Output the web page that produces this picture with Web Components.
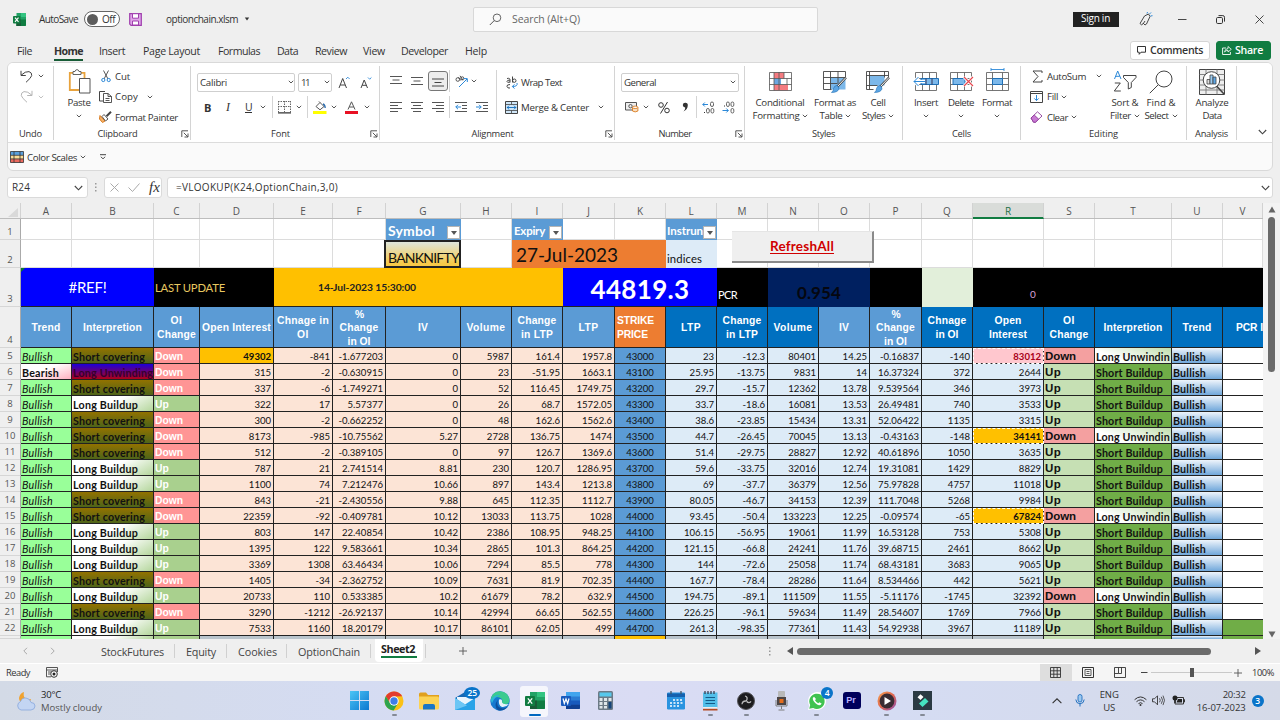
<!DOCTYPE html>
<html lang="en">
<head>
<meta charset="utf-8">
<title>optionchain.xlsm - Excel</title>
<style>
html,
body {
    margin: 0;
    height: 720px;
    overflow: hidden;
}
body {
    font-family: 'Open Sans', 'Noto Sans', sans-serif;
    background: #efefef;
}
</style>
</head>
<body>
<excel-desktop></excel-desktop>
<script>
(function() {
    // name: [width, height, svg content]
    const ICONS = {
        chev: [6, 4, '<path d="M.8.8 3 3 5.2.8" fill="none" stroke="#444" stroke-width=".9"/>'],
        chevlight: [6, 4, '<path d="M.8.8 3 3 5.2.8" fill="none" stroke="#bbb" stroke-width=".9"/>'],
        chevbig: [9, 6, '<path d="M.8 1 4.5 4.8 8.2 1" fill="none" stroke="#444" stroke-width="1.1"/>'],
        caret: [6, 4, '<path d="M.8.5h4.4L3 3.5z" fill="#333"/>'],
        excel: [13, 13, '<path d="M3.5 0H12q1 0 1 1v11q0 1-1 1H3.500z" fill="#21a366"/><path d="M8 0h4q1 0 1 1v3H8z" fill="#33c481"/><path d="M3.500 6.500H13V12q0 1-1 1H3.500z" fill="#107c41"/><path d="M3.500 6.500H8V13H3.500z" fill="#185c37"/><rect y="3" width="7.500" height="7.500" rx=".8" fill="#107c41"/><path d="m2 4.700 3.500 4.200m0-4.200L2 8.900" stroke="#fff" stroke-width="1.100"/>'],
        save: [13, 13, '<path d="M.7.700h11.600v11.600H2L.7 11z" fill="#dfa6e8" stroke="#a03fae" stroke-width="1.200"/><path d="M3.500.700h6v4.500h-6zM3.500 12V8h6v4z" fill="#fff" stroke="#a03fae"/>'],
        search: [13, 13, '<circle cx="8" cy="4.800" r="3.800" fill="none" stroke="#555" stroke-width=".9"/><path d="M5.200 7.600.8 12" stroke="#555"/>'],
        pen: [15, 14, '<path d="M3.500 12.800 2 11.500 6.500 4l4-2 1.500 2.500L8.500 12l-1.500 1-1.500-1.500zM5 12l2-3" fill="none" stroke="#333" stroke-width=".9"/><path d="M9 1.500 9.500 0m2 2L13 .5m-.5 3.500 2-.3" stroke="#2b88d8"/>'],
        min: [9, 9, '<path d="M0 4.500h8.500" stroke="#333" stroke-width=".9"/>'],
        restore: [9, 9, '<rect x=".5" y="2.500" width="6" height="6" rx="1.200" fill="none" stroke="#333"/><path d="M2.500.6h4.300q1.700 0 1.700 1.700v4.300" fill="none" stroke="#333"/>'],
        close: [9, 9, '<path d="m.5.500 8 8m0-8-8 8" stroke="#333" stroke-width=".9"/>'],
        comment: [9, 9, '<path d="M.5.500h8v5.700H4L2.200 8.300V6.200H.5z" fill="none" stroke="#333"/>'],
        share: [10, 10, '<path d="M4 3H.6v6.500h7.800V7" fill="none" stroke="#fff" stroke-width=".9"/><path d="M2.500 7Q3 3.800 6 3.500V1.500L9.300 4.300 6 7V5.300Q4 5.200 2.500 7z" fill="none" stroke="#fff" stroke-width=".8"/>'],
        undo: [13, 13, '<path d="M1 .8v4.700h4.800M1 5.300Q5.500 1 9 1.600q3.200 1 2.700 4Q11 8 6 12.300" fill="none" stroke="#444" stroke-width="1"/>'],
        redo: [13, 13, '<path d="M12 .8v4.700H7.200M12 5.300Q7.500 1 4 1.600.8 2.600 1.300 5.600 2 8 7 12.300" fill="none" stroke="#b5b5b5" stroke-width="1"/>'],
        paste: [23, 25, '<path d="M5 3.800H1.800V21h10M13 3.800h3.500V9" fill="none" stroke="#e8a33d" stroke-width="1.800"/><path d="M5 2.500h2Q7.500.6 9 .6t2 1.900h2v3H5z" fill="#fff" stroke="#555" stroke-width=".9"/><path d="M11.500 9.500H22V24H11.500z" fill="#fff" stroke="#555"/>'],
        cut: [10, 12, '<path d="M2.500.5 7 9M7.500.5 3 9" stroke="#444" stroke-width=".9"/><circle cx="2.300" cy="10" r="1.600" fill="none" stroke="#2b88d8"/><circle cx="7.700" cy="10" r="1.600" fill="none" stroke="#2b88d8"/>'],
        copy: [13, 12, '<path d="M4 10H.5V.5H6" fill="none" stroke="#444"/><path d="M4.500 2.500H9l3.500 3v6h-8zM9 2.500v3h3.500M6.500 7.500h4m-4 2h4" fill="none" stroke="#444" stroke-width=".9"/>'],
        painter: [13, 12, '<path d="m1 4.500 5 5.500-2.500 1.500L.5 8z" fill="#f6b26b" stroke="#d97b1e"/><path d="M5 3.500 9 8 6.500 10 3 5.500z" fill="#fff" stroke="#444" stroke-width=".9"/><path d="M7.500 5.300 12 .8" stroke="#444" stroke-width="2"/>'],
        launcher: [8, 8, '<path d="M.8 7V.8H7M2.800 2.800l4 4M7 3.500V7H3.500" fill="none" stroke="#444" stroke-width=".9"/>'],
        up: [12, 13, '<path d="m1 12 3.700-9.500L8.500 12M2.200 9H7" fill="none" stroke="#444"/><path d="m8 3 1.800-1.800L11.600 3" fill="none" stroke="#2b88d8" stroke-width=".9"/>'],
        down: [12, 13, '<path d="m1 12 3.200-8L7.500 12M2.200 9.300H6.300" fill="none" stroke="#444"/><path d="m8 1.500 1.700 1.700 1.700-1.700" fill="none" stroke="#2b88d8" stroke-width=".9"/>'],
        borders: [13, 13, '<path d="M.5 0v11M6.500 0v11M12.500 0v11M0 .5h13M0 5.500h13" stroke="#666" stroke-dasharray="1.500 1"/><path d="M0 11.800h13" stroke="#333" stroke-width="1.200"/>'],
        fill: [14, 13, '<path d="m3 5.500 4-4 4 4-4 3.300z" fill="#fff" stroke="#444" stroke-width=".9"/><path d="m7 1.500-1-1" stroke="#444"/><path d="M10 3q2 .5 2.200 4" fill="none" stroke="#2b6cb0" stroke-width="1.300"/><path d="M0 10h13.500v3H0z" fill="#ff0"/>'],
        color: [13, 13, '<path d="M3 8.500 6.500.8 10 8.500M4.300 6h4.500" fill="none" stroke="#555"/><path d="M0 10h13v3H0z" fill="#e81123"/>'],
        top: [12, 12, '<path d="M0 1.500h12M2.500 5h7M0 8.500h12" stroke="#555"/>'],
        middle: [12, 12, '<path d="M0 2.500h12M2.500 6h7M0 9.500h12" stroke="#555"/>'],
        bottom: [12, 12, '<path d="M0 4h12M2.500 7.500h7M0 11h12" stroke="#444"/>'],
        left: [12, 12, '<path d="M0 1.500h12M0 4.500h8M0 7.500h12M0 10.500h8" stroke="#555"/>'],
        center: [12, 12, '<path d="M0 1.500h12M2 4.500h8M0 7.500h12M2 10.500h8" stroke="#555"/>'],
        right: [12, 12, '<path d="M0 1.500h12M4 4.500h8M0 7.500h12M4 10.500h8" stroke="#555"/>'],
        outdent: [12, 12, '<path d="M0 1.500h12M7 4.500h5M7 7.500h5M0 10.500h12" stroke="#555"/><path d="M6 6H.8M3 3.800.8 6 3 8.200" fill="none" stroke="#2b88d8"/>'],
        indent: [12, 12, '<path d="M0 1.500h12M7 4.500h5M7 7.500h5M0 10.500h12" stroke="#555"/><path d="M0 6h5.200M3 3.800 5.200 6 3 8.200" fill="none" stroke="#2b88d8"/>'],
        orient: [13, 13, '<circle cx="2.800" cy="4.500" r="1.800" fill="none" stroke="#444" stroke-width=".9"/><path d="m3.500 2.200 2.300 3.300M5 .8l3 4.400" stroke="#444" stroke-width=".9"/><circle cx="7.300" cy="3.300" r="1.500" fill="none" stroke="#444" stroke-width=".9"/><path d="m4 12 8-8M8.800 3.600h3.500V7" fill="none" stroke="#2b88d8"/>'],
        wrap: [12, 13, '<path d="M1 2.500q3.500-1 3 2.500v1.500M4 4Q1 4 1 5.500T4 6M6.500.5v6" fill="none" stroke="#444"/><circle cx="8.300" cy="4.700" r="1.700" fill="none" stroke="#444"/><path d="M4 8.500q-3.500 0-3 2t3 1.500" fill="none" stroke="#444"/><path d="M11 7q1 3.500-4.500 3.500M8.500 8.300l-2.200 2.200 2.200 2" fill="none" stroke="#2b88d8"/>'],
        merge: [13, 13, '<path d="M.5.500h12v12H.5z" fill="#cfe6f8" stroke="#444"/><path d="M.5 3.500h12m-12 6h12M6.500.500v3m0 6v3" stroke="#444" stroke-width=".8"/><path d="M2 6.500h9M4 4.700 2.200 6.500 4 8.300m5-3.600 1.800 1.800L9 8.300" fill="none" stroke="#0f6cbd" stroke-width=".9"/>'],
        money: [14, 12, '<path d="M.5 1.500h11V9H.5z" fill="#eee" stroke="#555"/><circle cx="5.500" cy="5.200" r="1.700" fill="none" stroke="#555"/><path d="M7.500 6.500V10q2.700 1.800 5.400 0V6.500z" fill="#fbe1c3" stroke="#d97b1e" stroke-width=".9"/><ellipse cx="10.200" cy="6.300" rx="2.700" ry="1.200" fill="#fff" stroke="#d97b1e" stroke-width=".9"/>'],
        percent: [12, 13, '<circle cx="3" cy="4" r="2.300" fill="none" stroke="#333"/><circle cx="9" cy="9.500" r="2.300" fill="none" stroke="#333"/><path d="m9.500 1-7 11.500" stroke="#333"/>'],
        comma: [7, 13, '<path d="M.8 4a2.500 2.500 0 1 1 5 .3Q5.700 8.500 1.500 10.500 3.700 8 3.200 6.500.9 6.300.8 4z" fill="#333"/>'],
        incdec: [13, 13, '<path d="M6 3.500H.8M2.800 1.500l-2 2 2 2" fill="none" stroke="#2b88d8"/><rect x="8.500" y="1" width="3" height="4.500" rx="1.500" fill="none" stroke="#555" stroke-width=".9"/><rect x="4.500" y="7.500" width="2.800" height="4.500" rx="1.400" fill="none" stroke="#555" stroke-width=".9"/><rect x="9" y="7.500" width="2.800" height="4.500" rx="1.400" fill="none" stroke="#555" stroke-width=".9"/><path d="M2 11.500h1" stroke="#333"/>'],
        decdec: [13, 13, '<path d="M.5 9.500h5.800m-2-2 2 2-2 2" fill="none" stroke="#2b88d8"/><rect x="4.500" y="1" width="2.800" height="4.500" rx="1.400" fill="none" stroke="#555" stroke-width=".9"/><rect x="9" y="1" width="2.800" height="4.500" rx="1.400" fill="none" stroke="#555" stroke-width=".9"/><rect x="9" y="7.500" width="2.800" height="4.500" rx="1.400" fill="none" stroke="#555" stroke-width=".9"/><path d="M2 5h1" stroke="#333"/>'],
        cond: [23, 19, '<path d="M.5.500h22v18H.5z" fill="#fff"/><path d="M5 .5h10v6H5zM5 12.500h14v6H5z" fill="#f47b80"/><path d="M5 6.500h7v6H5z" fill="#6aa6e0"/><path d="M.5.500h22v18H.5zM.5 6.500h22m-22 6h22M5 .5v18M15 .5v6m3 0v6M10 0v18" fill="none" stroke="#555" stroke-width=".8"/>'],
        table: [24, 22, '<path d="M.5.500h22v18H.5z" fill="#fff"/><path d="M7.500 6.500h15v12h-15z" fill="#7cb8ea"/><path d="M22.500 8V.5H.5v18h8M.5 6.500h22m-22 6h14M7.500.5v18m7.500-18v12" fill="none" stroke="#444" stroke-width=".9"/><path d="M23 6.500 14 16" stroke="#444" stroke-width="2.400"/><path d="M23 6.500 14 16" stroke="#fff"/><path d="M13.500 14.500q2.500.500 2.500 3.500-1.500 3.500-7.500 3.500 2-1.500 2-4 1-3 3-3z" fill="#5ca5e3" stroke="#1f6fb5" stroke-width=".6"/>'],
        cellstyle: [24, 22, '<path d="M.5.500h22v18H.5z" fill="#fff"/><path d="M3.500 4.500h15v10h-15z" fill="#7cb8ea"/><path d="M22.500 7V.5H.5v18h7M.5 4.500h22M3.500.5v18M.5 14.500h11M18.500.5v6" fill="none" stroke="#444" stroke-width=".9"/><path d="M23 6.500 14 16" stroke="#444" stroke-width="2.400"/><path d="M23 6.500 14 16" stroke="#fff"/><path d="M13.500 14.500q2.500.500 2.500 3.500-1.500 3.500-7.500 3.500 2-1.500 2-4 1-3 3-3z" fill="#5ca5e3" stroke="#1f6fb5" stroke-width=".6"/>'],
        insert: [26, 19, '<path d="M2.500.500h21v18h-21zM2.500 6.500h21m-21 6h21M9.500.5v18m7-18v18" fill="#fff" stroke="#666" stroke-width=".9"/><path d="M8 6.500h17.500v6H8z" fill="#7cb8ea" stroke="#1f6fb5"/><path d="M13 6.500v6m6-6v6" stroke="#335"/><path d="M12 9.500H1m4.500-4.500L1 9.500 5.500 14" fill="none" stroke="#fff" stroke-width="3"/><path d="M12 9.500H1m4.500-4.500L1 9.500 5.500 14" fill="none" stroke="#2b88d8"/>'],
        delete: [25, 19, '<path d="M1.500.500h21v18h-21zM1.500 6.500h21m-21 6h21M8.500.5v18m7-18v18" fill="#fff" stroke="#666" stroke-width=".9"/><path d="M4 6.500h12v6H4z" fill="#7cb8ea" stroke="#1f6fb5"/><path d="m15 5 9 9m0-9-9 9" stroke="#fff" stroke-width="3"/><path d="m15 5 9 9m0-9-9 9" stroke="#e8474f" stroke-width="1.200"/>'],
        format: [23, 27, '<path d="M5 1.500h13M5 0v3m13-3v3" stroke="#2b88d8" stroke-width=".9"/><path d="M.5 4.500h22v18H.5zM.5 10.500h22m-22 6h22M6.500 4.500v18m10-18v18" fill="#fff" stroke="#666" stroke-width=".9"/><path d="M6.500 10.500h10v6h-10z" fill="#7cb8ea" stroke="#1f6fb5"/>'],
        sum: [11, 13, '<path d="M10 3V1H1l5 5.500L1 12h9v-2" fill="none" stroke="#444"/>'],
        fillcell: [13, 12, '<path d="M.5.500h12v11H.5z" fill="#fff" stroke="#444"/><path d="M.5 2.500h12" stroke="#444"/><path d="M6.500 4v5.500M4.300 7.400l2.200 2.200 2.200-2.200" fill="none" stroke="#2b88d8"/>'],
        eraser: [13, 12, '<path d="m1 7 6.500-6.200L12 5 5.500 11.200h-2z" fill="#fff" stroke="#8d3c98" stroke-width=".9"/><path d="m1 7 3.200-3 4.500 4.200-3.200 3h-2z" fill="#c879d3" stroke="#8d3c98" stroke-width=".9"/>'],
        sort: [24, 23, '<path d="m1.500 9 3.200-8L8 9M2.700 6.300h4" fill="none" stroke="#2b88d8"/><path d="M1.800 13h5.500l-6 8h6.500" fill="none" stroke="#444"/><path d="M10.500 5.500h12.500v2l-4.700 5v5l-3 1.500v-6.500l-4.800-5z" fill="#fff" stroke="#444"/>'],
        find: [24, 24, '<circle cx="15" cy="9" r="8" fill="none" stroke="#444"/><path d="M9.300 14.700.8 23.200" stroke="#444"/>'],
        analyze: [26, 26, '<path d="M.5.500h25v25H.5z" fill="#eee" stroke="#444"/><path d="M.5 5.500h25M.5 11h25M.5 16h25M.5 21h25M7 .5v25m11-25v25" stroke="#777" stroke-width=".9"/><path d="m17.500 17 7.500 8" stroke="#444" stroke-width="1.600"/><circle cx="12.500" cy="11" r="8.300" fill="#fff" stroke="#444"/><path d="M8 10.500h3V15H8z" fill="#ddd" stroke="#444" stroke-width=".8"/><path d="M11 6h3v9h-3z" fill="#9ccbf0" stroke="#444" stroke-width=".8"/><path d="M14 8h3v7h-3z" fill="#5ca5e3" stroke="#444" stroke-width=".8"/>'],
        scales: [14, 12, '<path d="M.5.500h13v3.800H.5z" fill="#5aa0dc"/><path d="M.5 4.300h13v3.600H.5z" fill="#fbdc95"/><path d="M.5 7.900h13v3.600H.5z" fill="#ec6a5e"/><path d="M.5.500h13v11H.5zM.5 4.300h13M.5 7.900h13M4 .5v11m6-11v11" fill="none" stroke="#333" stroke-width=".8"/>'],
        custom: [6, 6, '<path d="M0 .7h6" stroke="#444"/><path d="m.8 2.800 2.200 2 2.200-2" fill="none" stroke="#444" stroke-width=".9"/>'],
        dots: [2, 9, '<path d="M0 0h1.500v1.500H0zM0 3.500h1.500V5H0zM0 7h1.500v1.500H0z" fill="#999"/>'],
        cross: [9, 9, '<path d="m.5.500 8 8m0-8-8 8" stroke="#aaa"/>'],
        check: [12, 9, '<path d="m.5 4.500 4 4 7-8" fill="none" stroke="#aaa"/>'],
        corner: [10, 9, '<path d="M10 0v9H0z" fill="#d9d9d9"/>'],
        prev: [5, 8, '<path d="M4 .8.800 4 4 7.200" fill="none" stroke="#aaa"/>'],
        next: [5, 8, '<path d="M1 .8 4.200 4 1 7.200" fill="none" stroke="#aaa"/>'],
        plus: [8, 8, '<path d="M4 0v8M0 4h8" stroke="#555" stroke-width=".9"/>'],
        minus: [7, 7, '<path d="M0 3.500h6.500" stroke="#444"/>'],
        tri: [6, 8, '<path d="M6 0v8L0 4z" fill="#555"/>'],
        trir: [6, 8, '<path d="M0 0v8l6-4z" fill="#555"/>'],
        triu: [8, 7, '<path d="m4 .5 3.500 6h-7z" fill="#666"/>'],
        trid: [8, 7, '<path d="m4 6.500 3.500-6h-7z" fill="#666"/>'],
        macro: [12, 11, '<path d="M11.500 5V.5H.5v9.300H5M.5 3h11M2 5h3M2 7h2" fill="none" stroke="#444" stroke-width=".9"/><circle cx="8" cy="7" r="3.300" fill="#fff" stroke="#333"/><circle cx="8" cy="7" r="1.500" fill="#222"/>'],
        vnormal: [11, 11, '<path d="M.5.500h10v10H.5zM.5 3.800h10M.5 7.200h10M3.800.5v10M7.200.5v10" fill="none" stroke="#333" stroke-width=".9"/>'],
        vpage: [12, 11, '<path d="M.5.500h11v10H.5z" fill="none" stroke="#333"/><path d="M3 2.500h6v6H3zM4.500 4.500h3m-3 2h3" fill="none" stroke="#333" stroke-width=".8"/>'],
        vbreak: [12, 11, '<path d="M.5.500h11v10H.5zM4.500.500v6h3V.5M.5 6.500h4" fill="none" stroke="#333" stroke-width=".9"/>'],
        weather: [20, 20, '<path d="M8 1q-1 4 1 6t6 1q-1 5-6 5-6-1-6-6 1-5 5-6z" fill="#f0a22e"/><path d="M5 19a4.500 4.500 0 0 1-.5-8.500Q6 6.500 10 7t5 4.500Q19 11.500 19 15t-4 4z" fill="#c3d5f3" stroke="#88a7dc" stroke-width=".8"/>'],
        win: [19, 19, '<defs><linearGradient id="g" x2="1" y2="1"><stop stop-color="#4cc5f5"/><stop offset="1" stop-color="#0b78d0"/></linearGradient></defs><path d="M0 0h9v9H0zM10 0h9v9h-9zM0 10h9v9H0zM10 10h9v9h-9z" fill="url(#g)"/>'],
        chrome: [20, 20, '<circle cx="10" cy="10" r="9.500" fill="#fbc116"/><path d="M1.800 5.200A9.500 9.500 0 0 1 18.200 5.300L10 5.500 6 12z" fill="#e33b2e"/><path d="M1.800 5.200A9.500 9.500 0 0 0 9.600 19.500L14 12.300 6 12z" fill="#2da44e"/><circle cx="10" cy="10" r="4.700" fill="#fff"/><circle cx="10" cy="10" r="3.700" fill="#3f7de8"/>'],
        folder: [20, 18, '<path d="M0 2q0-1.500 1.500-1.500H7L9 3h11v3H0z" fill="#e0a01f"/><path d="M0 4.500h18.500q1.500 0 1.500 1.500v10q0 1.500-1.500 1.500h-17Q0 17.500 0 16z" fill="#fcd354"/><path d="M4 17.500V14q0-2 2-2h8q2 0 2 2v3.500z" fill="#1976c6"/>'],
        mail: [20, 18, '<path d="M10 0 20 6v12H0V6z" fill="#1769b5"/><path d="M2 5h16v8H2z" fill="#e9f4fd"/><path d="m0 6 10 6.500L20 6v12H0z" fill="#2aa3e8"/><path d="m0 6 12 7.500L0 18z" fill="#6cc6f5"/>'],
        edge: [20, 20, '<circle cx="10" cy="10" r="9.700" fill="#1679cf"/><path d="M.6 9Q2 .5 10 .3q8 .5 9.400 8 .3 5.200-5 5.200-3 0-2.500-2 1-1.500 0-3.500Q7 3.500.6 9z" fill="#3ccb8f"/><path d="M.6 9Q5 3 10.500 4.200q-6 1-8.500 8z" fill="#2db5d8"/><path d="M8 8.500Q5 16 13 17.500q3-.3 5-2-4 5-10 3.700Q3 15 8 8.500z" fill="#0d4f9e"/><path d="M9 8.500Q12.500 7 12 11.500q1 2.500 7 1.500-3 3.500-7 3Q8 14.500 9 8.500z" fill="#e6f2fa"/>'],
        word: [19, 17, '<path d="M5 0h13q1 0 1 1v15q0 1-1 1H5z" fill="#2b7cd3"/><path d="M5 0h13q1 0 1 1v3.500H5z" fill="#41a5ee"/><path d="M5 8.500h14V13H5z" fill="#185abd"/><path d="M5 12.700h14V16q0 1-1 1H5z" fill="#103f91"/><rect y="4" width="10" height="10" rx="1" fill="#185abd"/><path d="m2 6.500 1.300 5L5 7l1.700 4.500 1.300-5" fill="none" stroke="#fff" stroke-width="1.200"/>'],
        excelbig: [20, 17, '<path d="M5 0h14q1 0 1 1v15q0 1-1 1H5z" fill="#21a366"/><path d="M12 0h7q1 0 1 1v4h-8z" fill="#33c481"/><path d="M5 8.500h15V16q0 1-1 1H5z" fill="#107c41"/><path d="M5 8.500h7V17H5z" fill="#185c37"/><rect y="4" width="10" height="10" rx="1" fill="#107c41"/><path d="m2.800 6.300 4.400 5.400m0-5.400-4.400 5.400" stroke="#fff" stroke-width="1.300"/>'],
        calc: [15, 19, '<rect width="15" height="19" rx="1.500" fill="#6c7a86"/><path d="M1.500 1.500h12v4h-12z" fill="#57c8ec"/><path d="M1.500 7h3v3h-3zM6 7h3v3H6zm4.500 0h3v3h-3zm-9 4h3v3h-3zM6 11h3v3H6zm-4.500 4h3v2.500h-3zM6 15h3v2.500H6z" fill="#dfe6ea"/><path d="M10.500 11h3v6.500h-3z" fill="#15457a"/>'],
        calendar: [18, 19, '<rect y="1.500" width="18" height="17" rx="1.200" fill="#2a94e0"/><path d="M0 2.500h18V6H0z" fill="#1560ad"/><path d="M4 0v3m10-3v3" stroke="#456" stroke-width="1.300"/><path d="M6 9h2M9.500 9h2M13 9h2M3 12h2m1.500 0h2m1.500 0h2m1.500 0h2M3 15h2m1.500 0h2m1.500 0h2" stroke="#fff" stroke-width="1.700"/>'],
        notes: [15, 20, '<path d="M0 1.500h14.500V17H0z" fill="#53bfe9"/><path d="M2 0v3m3-3v3m3-3v3m3-3v3" stroke="#334" stroke-width="1.200"/><path d="M2.500 6.500h9.500M2.500 9.500h9.500M2.500 12.500h9.500" stroke="#155b88"/><path d="M0 16h14.500v1.500H0z" fill="#eee"/><path d="M0 17.800h14.500v1.700H0z" fill="#b64a22"/>'],
        obs: [18, 18, '<circle cx="9" cy="9" r="8.500" fill="#1c1c1e" stroke="#55555a"/><path d="M8 4q3.500 1 1.300 5M9.500 9.300q2.500 2.700 4.500 0M9 9Q5.300 8.800 5 12.300" fill="none" stroke="#bbb" stroke-width="1.300"/>'],
        mic: [13, 20, '<rect x="3" width="7" height="7" rx="1" fill="#b9b9b9"/><rect x="2" y="6" width="9" height="8" fill="#4d4646"/><rect x="4.500" y="8" width="4" height="4" fill="#e56d1d"/><path d="M1 9v6h11V9M6.500 15v3M3.500 19h6" fill="none" stroke="#7c7c7c"/>'],
        whatsapp: [20, 20, '<path d="M1 19 2.300 14.500A9 9 0 1 1 6 18z" fill="#fff"/><path d="m2.200 17.800 1-3.700a7.700 7.700 0 1 1 3 3z" fill="#40c351"/><path d="M7 5.800q-2 1-1 3.200 2 4 6 5.200 2 .2 2.600-1.700l-2.200-1.300-1.200 1q-2-.8-3.200-3L9 8z" fill="#fff"/>'],
        pr: [18, 17, '<rect width="18" height="17" rx="3" fill="#00005b"/>'],
        media: [20, 20, '<defs><linearGradient id="m" x2="1" y2="1"><stop stop-color="#f6a04d"/><stop offset=".5" stop-color="#e0664f"/><stop offset="1" stop-color="#8c4fb5"/></linearGradient></defs><circle cx="10" cy="10" r="9.500" fill="url(#m)"/><circle cx="10" cy="10" r="7.400" fill="#3a2d33"/><path d="m7.500 6 6.500 4-6.500 4z" fill="#fff"/>'],
        filmora: [19, 19, '<rect width="19" height="19" fill="#2b3a43"/><path d="m4.500 6.300 3-3L10.500 6l-3 3z" fill="#fff"/><path d="m6 12.500 6-5.500 3.500 3.500L9.500 16z" fill="#46e3c0"/>'],
        trayup: [10, 6, '<path d="m.6 5.200 4.400-4.400 4.400 4.400" fill="none" stroke="#333" stroke-width="1.100"/>'],
        traymic: [10, 13, '<rect x="3" y=".5" width="4" height="7.500" rx="2" fill="#9cc8ef" stroke="#2271bf" stroke-width=".9"/><path d="M.8 5.500Q1 9.500 5 9.800q4-.3 4.200-4.300M5 9.800v2.700" fill="none" stroke="#2271bf"/>'],
        wifi: [13, 10, '<path d="M.6 3.700q5.900-5.500 11.800 0M2.500 5.700q4-3.600 8 0M4.500 7.600q2-1.800 4 0" fill="none" stroke="#333"/><circle cx="6.500" cy="8.900" r="1" fill="#333"/>'],
        speaker: [13, 11, '<path d="M.5 3.800H2.500l3-3v9l-3-3H.5z" fill="none" stroke="#333" stroke-width=".9"/><path d="M7.500 3.300q1.500 2 0 4M9.300 1.800q2.500 3.500 0 7M11 .6q3 4.700 0 9.500" fill="none" stroke="#333" stroke-width=".8"/>'],
        battery: [14, 11, '<path d="M3 2.500h8.500v6.500H3z" fill="none" stroke="#333"/><path d="M6 4h4v3.500H4.500z" fill="#222"/><path d="M12.500 4.300v3" stroke="#333"/><circle cx="3" cy="3" r="2.500" fill="#222"/><path d="M3 5v3" stroke="#222" stroke-width="1.500"/>']
    };

    const icon = (name, gap = 0) =>
        `<x-icon name="${name}" style="margin-left:${gap}px"></x-icon>`;
    const label = (text, width, gap = 0, css = '') =>
        `<x-label w="${width}" style="margin-left:${gap}px;${css}">${text}</x-label>`;
    const sep = gap => `<i class="sep" style="margin-left:${gap}px"></i>`;

    // registers an element whose shadow root is cloned from a template
    function define(name, css, html, Base = HTMLElement) {
        const template = document.createElement('template');

        template.innerHTML = `<style>*{box-sizing:border-box}${css}</style>${html}`;

        window.customElements.define(
            name,
            class extends Base {
                constructor() {
                    super();
                    this.attachShadow({ mode: 'open' });
                    this.shadowRoot.appendChild(template.content.cloneNode(true));
                }
            }
        );
    }

    class Icon extends HTMLElement {
        connectedCallback() {
            const [w, h, body] = ICONS[this.getAttribute('name')];

            this.shadowRoot.querySelector('div').innerHTML =
                `<svg width="${w}" height="${h}" viewBox="0 0 ${w} ${h}">${body}</svg>`;
        }
    }

    // text spread over a fixed width by letter spacing
    class Label extends HTMLElement {
        connectedCallback() {
            const width = parseFloat(this.getAttribute('w'));
            const span = this.shadowRoot.querySelector('span');
            const natural = span.getBoundingClientRect().width;

            span.style.letterSpacing = (width - natural) / this.textContent.length + 'px';
            this.style.width = width + 'px';
        }
    }

    define('x-icon', ':host{display:block;flex:none}div,svg{display:block;overflow:visible}', '<div></div>', Icon);
    define(
        'x-label',
        ':host{display:inline-block;flex:none;white-space:pre;line-height:13px;text-align:left}',
        '<span><slot></slot></span>',
        Label
    );

    define(
        'title-bar',
        `
:host { display: flex; align-items: center; height: 38px; font-size: 10px; color: #333; }
.toggle { display: flex; align-items: center; width: 36px; height: 16px; margin-left: 6px; border: 1px solid #666; border-radius: 8px; background: #fff; padding-left: 2px; }
.toggle i { width: 11px; height: 11px; border-radius: 50%; background: #5c5c5c; }
.search { display: flex; align-items: center; width: 345px; height: 25px; margin-left: 223px; border: 1px solid #d8d8d8; border-radius: 2px; background: #fafafa; color: #666; padding-left: 15px; }
.sign { width: 46px; height: 15px; margin-left: 255px; background: #222; color: #fff; padding-left: 8px; line-height: 13px; }`,
        `${icon('excel', 13)}${label('AutoSave', 39, 13)}
<div class="toggle"><i></i>${label('Off', 13, 4)}</div>${icon('save', 9)}
${label('optionchain.xlsm', 72, 24)}${icon('caret', 6)}
<div class="search">${icon('search')}${label('Search (Alt+Q)', 68, 10, 'font-size:10.5px')}</div>
<div class="sign">${label('Sign in', 29)}</div>
${icon('pen', 19)}${icon('min', 25)}${icon('restore', 29)}${icon('close', 30)}`
    );

    define(
        'ribbon-tabs',
        `
:host { display: flex; align-items: center; height: 24px; padding-top: 2px; font-size: 10.6px; color: #333; }
b { display: block; margin-left: 22px; border-bottom: 2px solid #185c37; padding-top: 2px; height: 19px; }
.btn { display: flex; align-items: center; height: 19px; margin-top: -2px; border-radius: 3px; border: 1px solid #d5d5d5; background: #fff; width: 80px; margin-left: 643px; padding-left: 6px; font-weight: 600; }
.share { background: #107c41; border-color: #107c41; color: #fff; width: 55px; margin-left: 6px; padding-left: 5px; }`,
        `${label('File', 15, 17)}<b>${label('Home', 29)}</b>${label('Insert', 26, 16)}
${label('Page Layout', 57, 18)}${label('Formulas', 42, 18)}${label('Data', 21, 17)}
${label('Review', 32, 17)}${label('View', 22, 16)}${label('Developer', 47, 16)}${label('Help', 22, 17)}
<div class="btn">${icon('comment')}${label('Comments', 53, 4)}</div>
<div class="btn share">${icon('share')}${label('Share', 28, 3)}</div>`
    );

    define(
        'ribbon-group',
        `
:host { display: flex; flex-direction: column; height: 74px; margin-top: 3px; border-right: 1px solid #d4d4d4; flex: none; }
.body { display: flex; flex: none; height: 61px; overflow: visible; }
.foot { display: flex; align-items: center; height: 13px; flex: none; justify-content: center; font-size: 9.3px; line-height: 13px; }
.foot div { flex: 1; text-align: center; }
.foot x-icon { margin-right: 1px; display: none; }
:host([launch]) .foot x-icon { display: block; }`,
        `<div class="body"><slot></slot></div>
<div class="foot"><div><slot name="title"></slot></div>${icon('launcher')}</div>`
    );

    const big = (name, width, gap, first, second) => `
<div class="big" style="width:${width}px;margin-left:${gap}px">
    <div class="pic">${icon(name)}</div><div class="line">${first}</div><div class="line">${second}</div>
</div>`;
    const group = (width, title, titleWidth, body, launch = '') =>
        `<ribbon-group ${launch} style="width:${width}px">${body}
<span slot="title">${label(title, titleWidth)}</span></ribbon-group>`;

    define(
        'excel-ribbon',
        `
:host { display: block; margin: 0 7px; border: 1px solid #d9d9d9; border-radius: 6px; height: 109px; background: #fafafa; font-size: 9.7px; color: #333; overflow: hidden; }
.groups { display: flex; height: 80px; background: #fff; border-bottom: 1px solid #dcdcdc; }
.small .r { height: 20.5px; }
.r { display: flex; align-items: center; height: 26px; }
.tall { padding-top: 3px; }
.r + .r.two { height: 24px; }
.big { display: flex; flex-direction: column; align-items: center; padding-top: 1px; }
.pic { display: flex; align-items: center; justify-content: center; height: 29px; }
.line { display: flex; align-items: center; justify-content: center; height: 13px; }
.sel { display: flex; align-items: center; height: 19px; border: 1px solid #cfcfcf; border-radius: 2px; flex: none; }
.sep { width: 1px; height: 22px; background: #d4d4d4; flex: none; }
.on { display: flex; width: 20px; height: 20px; margin-left: 5px; border: 1px solid #777; border-radius: 3px; background: #ededed; padding: 3px; }
.split { width: 117px; border-right: 1px solid #d4d4d4; height: 50px; margin-top: 4px; }
.split .r:first-child { height: 22px; margin-bottom: 2px; }
.end { margin: 66px 0 0 21px; }
.qat { display: flex; align-items: center; height: 28px; }`,
        `<div class="groups">
${group(46, 'Undo', 23, `<div class="small">
    <div class="r">${icon('undo', 12)}${icon('chev', 5)}</div>
    <div class="r">${icon('redo', 12)}${icon('chevlight', 5)}</div></div>`)}
${group(137, 'Clipboard', 40, `${big('paste', 26, 12, label('Paste', 23), icon('chev'))}
    <div class="small" style="margin-left:7px">
    <div class="r">${icon('cut', 2)}${label('Cut', 15, 4)}</div>
    <div class="r">${icon('copy')}${label('Copy', 23, 3)}${icon('chev', 9)}</div>
    <div class="r">${icon('painter')}${label('Format Painter', 63, 3)}</div></div>`, 'launch')}
${group(189, 'Font', 19, `<div class="tall">
    <div class="r"><div class="sel" style="width:98px;margin-left:6px">${label('Calibri', 27, 2)}${icon('chev', 61)}</div>
    <div class="sel" style="width:34px;margin-left:3px">${label('11', 8, 2)}${icon('chev', 15)}</div>
    ${icon('up', 6)}${icon('down', 10)}</div>
    <div class="r two">${label('B', 7, 13, 'font-weight:700;font-size:11px')}${label('I', 5, 15, 'font:italic 12px Liberation Serif,serif')}
    ${label('<u>U</u>', 7, 14, 'font-size:10.5px')}${icon('chev', 8)}${sep(6)}${icon('borders', 5)}${icon('chev', 5)}
    ${sep(5)}${icon('fill', 5)}${icon('chev', 4)}${icon('color', 8)}${icon('chev', 6)}</div></div>`, 'launch')}
${group(235, 'Alignment', 42, `<div class="split">
    <div class="r">${icon('top', 10)}${icon('middle', 9)}<div class="on">${icon('bottom')}</div>${sep(1)}${icon('orient', 5)}${icon('chev', 3)}</div>
    <div class="r">${icon('left', 10)}${icon('center', 9)}${icon('right', 9)}${sep(5)}${icon('outdent', 5)}${icon('indent', 9)}</div></div>
    <div class="tall">
    <div class="r">${icon('wrap', 9)}${label('Wrap Text', 41, 3)}</div>
    <div class="r two">${icon('merge', 8)}${label('Merge &amp; Center', 68, 3)}${icon('chev', 9)}</div></div>`, 'launch')}
${group(130, 'Number', 33, `<div class="tall">
    <div class="r"><div class="sel" style="width:118px;margin-left:6px">${label('General', 32, 2)}${icon('chev', 74)}</div></div>
    <div class="r two">${icon('money', 10)}${icon('chev', 4)}${icon('percent', 9)}${icon('comma', 12)}${sep(7)}${icon('incdec', 5)}${icon('decdec', 7)}</div></div>`, 'launch')}
${group(158, 'Styles', 23, `${big('cond', 56, 7, label('Conditional', 49), label('Formatting', 47) + icon('chev', 2))}
    ${big('table', 44, 5, label('Format as', 42), label('Table', 23) + icon('chev', 2))}
    ${big('cellstyle', 34, 4, label('Cell', 15), label('Styles', 23) + icon('chev', 3))}`)}
${group(118, 'Cells', 19, `${big('insert', 26, 10, label('Insert', 24), icon('chev'))}
    ${big('delete', 26, 9, label('Delete', 26), icon('chev'))}${big('format', 30, 8, label('Format', 30), icon('chev'))}`)}
${group(166, 'Editing', 29, `<div class="small" style="margin-left:9px;width:72px">
    <div class="r">${icon('sum', 2)}${label('AutoSum', 39, 4)}${icon('chev', 10)}</div>
    <div class="r">${icon('fillcell')}${label('Fill', 11, 4)}${icon('chev', 3)}</div>
    <div class="r">${icon('eraser')}${label('Clear', 21, 4)}${icon('chev', 3)}</div></div>
    ${big('sort', 30, 8, label('Sort &amp;', 27), label('Filter', 21) + icon('chev', 3))}
    ${big('find', 32, 5, label('Find &amp;', 29), label('Select', 24) + icon('chev', 3))}`)}
${group(50, 'Analysis', 33, big('analyze', 34, 8, label('Analyze', 33), label('Data', 19)))}
<div class="end">${icon('chevbig')}</div>
</div>
<div class="qat">${icon('scales', 2)}${label('Color Scales', 50, 3)}${icon('chev', 3)}${icon('custom', 14)}</div>`
    );

    define(
        'formula-bar',
        `
:host { display: flex; align-items: center; height: 33px; padding: 0 7px; font-size: 10px; color: #333; }
div { display: flex; align-items: center; height: 21px; background: #fff; border: 1px solid #dadada; border-radius: 3px; }`,
        `<div style="width:81px">${label('R24', 18, 4)}${icon('chevbig', 44)}</div>${icon('dots', 7)}
<div style="width:58px;margin-left:7px">${icon('cross', 5)}${icon('check', 9)}${label('fx', 11, 9, "font:italic 15px 'Liberation Serif',serif;")}</div>
<div style="flex:1;margin-left:5px">${label('=VLOOKUP(K24,OptionChain,3,0)', 162, 8)}${icon('chevbig', 923)}</div>`
    );

    const EDGES = [21, 72, 154, 200, 274, 333, 386, 461, 512, 563, 615, 666, 717, 768, 819, 870, 922, 973, 1044, 1095, 1172, 1223, 1263];
    const COLUMNS = EDGES.slice(1).map((edge, i) => edge - EDGES[i]);
    const ROWS = `
49302 -841 -1.677203 0 5987 161.4 1957.8 43000 23 -12.3 80401 14.25 -0.16837 -140 83012
315 -2 -0.630915 0 23 -51.95 1663.1 43100 25.95 -13.75 9831 14 16.37324 372 2644
337 -6 -1.749271 0 52 116.45 1749.75 43200 29.7 -15.7 12362 13.78 9.539564 346 3973
322 17 5.57377 0 26 68.7 1572.05 43300 33.7 -18.6 16081 13.53 26.49481 740 3533
300 -2 -0.662252 0 48 162.6 1562.6 43400 38.6 -23.85 15434 13.31 52.06422 1135 3315
8173 -985 -10.75562 5.27 2728 136.75 1474 43500 44.7 -26.45 70045 13.13 -0.43163 -148 34141
512 -2 -0.389105 0 97 126.7 1369.6 43600 51.4 -29.75 28827 12.92 40.61896 1050 3635
787 21 2.741514 8.81 230 120.7 1286.95 43700 59.6 -33.75 32016 12.74 19.31081 1429 8829
1100 74 7.212476 10.66 897 143.4 1213.8 43800 69 -37.7 36379 12.56 75.97828 4757 11018
843 -21 -2.430556 9.88 645 112.35 1112.7 43900 80.05 -46.7 34153 12.39 111.7048 5268 9984
22359 -92 -0.409781 10.12 13033 113.75 1028 44000 93.45 -50.4 133223 12.25 -0.09574 -65 67824
803 147 22.40854 10.42 2386 108.95 948.25 44100 106.15 -56.95 19061 11.99 16.53128 753 5308
1395 122 9.583661 10.34 2865 101.3 864.25 44200 121.15 -66.8 24241 11.76 39.68715 2461 8662
3369 1308 63.46434 10.06 7294 85.5 778 44300 144 -72.6 25058 11.74 68.43181 3683 9065
1405 -34 -2.362752 10.09 7631 81.9 702.35 44400 167.7 -78.4 28286 11.64 8.534466 442 5621
20733 110 0.533385 10.2 61679 78.2 632.9 44500 194.75 -89.1 111509 11.55 -5.11176 -1745 32392
3290 -1212 -26.92137 10.14 42994 66.65 562.55 44600 226.25 -96.1 59634 11.49 28.54607 1769 7966
7533 1160 18.20179 10.17 86101 62.05 499 44700 261.3 -98.35 77361 11.43 54.92938 3967 11189`
        .trim()
        .split('\n')
        .map(line => line.split(' '));

    const cell = (cls, content = '', span = 1) =>
        `<div class="c ${cls}" style="grid-column:span ${span}">${content}</div>`;
    const row = (number, height, cells, cls = '') =>
        `<div class="row ${cls}" style="height:${height}px"><div class="num">${number}</div>${cells}</div>`;

    class Sheet extends HTMLElement {
        connectedCallback() {
            this.shadowRoot.querySelector('.rows').innerHTML =
                this._renderHeader() + this._renderTop() + this._renderTitles() +
                ROWS.map(this._renderRow).join('') + this._renderLast();
        }

        _renderHeader() {
            const letters = [...'ABCDEFGHIJKLMNOPQRSTUV'];

            return `<div class="row head"><div class="corner">${icon('corner')}</div>${letters
                .map(l => `<div class="${l === 'R' ? 'active' : ''}">${l}</div>`)
                .join('')}</div>`;
        }

        _renderTop() {
            const filter = '<span class="filter"></span>';
            const empty = n => cell('e').repeat(n);

            return (
                row(1, 21, empty(6) +
                    cell('b5 w', label('Symbol', 47, 2, 'font-size:14px') + filter) + empty(1) +
                    cell('b5 w', label('Expiry', 31, 2, 'font-size:11.5px') + filter) + empty(2) +
                    cell('b5 w', label('Instrun', 36, 1, 'font-size:11.5px') + filter) + empty(10)) +
                row(2, 28, empty(6) +
                    cell('symbol', label('BANKNIFTY', 71, 1, 'font-size:14px')) + empty(1) +
                    cell('date', label('27-Jul-2023', 102, 4, 'font-size:19px'), 3) +
                    cell('idx', label('indices', 35, 1, 'font-size:11.3px')) + empty(10)) +
                row(3, 39,
                    cell('blue err mid', label('#REF!', 38, 0, 'font-size:15px'), 2) +
                    cell('black gold', label('LAST UPDATE', 70, 1, 'font-size:11.3px'), 2) +
                    cell('amber', label('14-Jul-2023 15:30:00', 98, 44, 'font-size:10.3px;font-weight:700'), 5) +
                    cell('blue mid spot', label('44819.3', 99, 0, 'font-size:26px;font-weight:700;line-height:30px'), 3) +
                    cell('black low', label('PCR', 19, 1, 'font-size:11px')) +
                    cell('navy', label('0.954', 44, 0, 'font-size:17px;font-weight:700'), 2) +
                    cell('black') + cell('mint') +
                    cell('black low pink', label('0', 6, 57, 'font-size:10px')) + cell('black', '', 4))
            );
        }

        _renderTitles() {
            const titles = [
                ['b5', ['Trend', 29]], ['b5', ['Interpretion', 59]], ['b5', ['OI', 12], ['Change', 39]],
                ['b5', ['Open Interest', 69]], ['b5', ['Chnage in', 52], ['OI', 12]],
                ['b5', ['%', 8], ['Change', 39], ['in OI', 23]], ['b5', ['IV', 10]], ['b5', ['Volume', 39]],
                ['b5', ['Change', 39], ['in LTP', 32]], ['b5', ['LTP', 20]], ['strike', ['STRIKE', 37], ['PRICE', 31]],
                ['b7', ['LTP', 20]], ['b7', ['Change', 39], ['in LTP', 32]], ['b7', ['Volume', 39]], ['b5', ['IV', 10]],
                ['b5', ['%', 8], ['Change', 39], ['in OI', 23]], ['b7', ['Chnage', 39], ['in OI', 23]],
                ['b7', ['Open', 27], ['Interest', 38]], ['b7', ['OI', 12], ['Change', 39]],
                ['b7', ['Interpretion', 59]], ['b7', ['Trend', 29]], ['b7 pcr', ['PCR I', 27]]
            ];

            return row(4, 41, titles.map(([cls, ...lines]) =>
                cell(`title ${cls}`, lines.map(([text, w]) => label(text, w)).join(''))).join(''));
        }

        _renderRow(values, index) {
            const number = index + 5;
            const n = values.map(Number);
            const bearish = number === 6;
            const up = n[1] > 0;
            const right = n[13] > 0;
            let first;

            if (bearish) {
                first = cell('bear', label('Bearish', 37, 1)) + cell('unwind', label('Long Unwinding', 80, 1));
            } else {
                first = cell('bull', label('Bullish', 31, 1)) + (up
                    ? cell('buildup', label('Long Buildup', 65, 1))
                    : cell('cover', label('Short covering', 72, 1)));
            }

            const figures = values.map((value, i) => {
                let cls = i < 7 ? 'peach' : 'ice';

                if (i === 7) cls = 'price';
                if (i === 0 && number === 5) cls = 'hot';
                if (i === 14 && !right && n[14] > 33000) cls = number === 5 ? 'rose ants' : 'hot ants';

                return cell(`n ${cls}`, value);
            }).join('');

            return row(number, 16, first +
                cell(up ? 'up' : 'down', up ? label('Up', 14, 1) : label('Down', 28, 1)) + figures +
                cell(right ? 'sup' : 'sdown', right ? label('Up', 16, 1) : label('Down', 31, 1)) +
                cell(right ? 'tshort' : 'tlong', right ? label('Short Buildup', 67, 1) : label('Long Unwindin', 74, 1)) +
                cell('trend', label('Bullish', 33, 1)) + cell(number === 22 ? 'vgreen' : 'v'), 'data');
        }

        _renderLast() {
            const kinds = ['bull', 'buildup', 'up', ...Array(7).fill('grey'), 'hot', ...Array(7).fill('grey'), 'sup', 'tshort', 'trend', 'vgreen'];

            return row('', 3, kinds.map(kind => cell(kind)).join(''), 'data last');
        }
    }

    define(
        'sheet-grid',
        `
:host { display: block; position: relative; width: 1263px; height: 436px; overflow: hidden; font-family: Lato, 'Open Sans', sans-serif; font-size: 9.55px; color: #111; font-variant-numeric: tabular-nums; }
.row { display: grid; grid-template-columns: 21px ${COLUMNS.map(w => w + 'px').join(' ')}; }
.head { height: 16px; font: 10px/17px 'Open Sans', sans-serif; color: #555; text-align: center; border-bottom: 1px solid #bdbdbd; }
.head > div { border-right: 1px solid #d2d2d2; height: 15px; }
.head .active { background: #d9dcd9; color: #1e7145; border-bottom: 2px solid #107c41; height: 16px; }
.corner { padding: 5px 0 0 8px; }
.num { font: 9.5px/14px 'Open Sans', sans-serif; color: #555; display: flex; align-items: flex-end; justify-content: center; border-bottom: 1px solid #d6d6d6; border-right: 1px solid #aaa; }
.c { display: flex; align-items: center; overflow: hidden; min-width: 0; position: relative; }
.e { background: #fff; border-right: 1px solid #dcdcdc; border-bottom: 1px solid #dcdcdc; }
.b5 { background: #5b9bd5; }
.b7 { background: #0070c0; }
.w { color: #fff; font-weight: 700; padding-top: 1px; }
.filter { position: absolute; right: 1px; bottom: 1px; width: 13px; height: 13px; background: #fff; border: 1px solid #b5b5b5; }
.filter:after { content: ''; position: absolute; left: 3px; top: 4px; border: 3px solid transparent; border-top: 4px solid #555; border-bottom: 0; }
.symbol { border: 2px solid #222; background: linear-gradient(#dfe6dc, #f7c948 90%); margin-left: -2px; padding: 7px 0 0 1px; }
.date { background: #ed7d31; padding-top: 1px; }
.idx { background: #ddebf7; padding-top: 9px; }
.mid { justify-content: center; }
.blue { background: #00f; color: #fff; border-bottom: 1px solid #222; }
.spot { padding-top: 4px; }
.err:before { content: ''; position: absolute; left: 0; top: 0; border: 2px solid #0a7d2c; border-right-color: transparent; border-bottom-color: transparent; }
.black { background: #000; color: #fff; }
.gold { color: #e8c860; }
.low { align-items: flex-end; padding-bottom: 6px; }
.pink { color: #d9a0d9; }
.amber { background: #ffc000; color: #222; border-bottom: 1px solid #222; }
.navy { background: #002060; color: #05070f; justify-content: center; padding-top: 9px; }
.mint { background: #e2efda; }
.title { flex-direction: column; justify-content: center; color: #fff; font: 700 10.3px 'Liberation Sans', Arial, sans-serif; border-right: 1px solid #222; border-bottom: 1px solid #222; padding-top: 2px; }
.title x-label { line-height: 13.6px; }
.strike { background: #ed7d31; align-items: flex-start; padding-left: 2px; }
.pcr { align-items: flex-start; padding-left: 13px; border-right: 0; }
.data .c { border-right: 1px solid #222; border-bottom: 1px solid #222; font-weight: 700; font-size: 10.7px; padding-top: 1px; }
.data .n { justify-content: flex-end; padding-right: 2px; font-weight: 400; font-size: 9.55px; }
.data .bull { background: #99ff99; font-style: italic; font-weight: 400; }
.bear { background: linear-gradient(160deg, #fff 40%, #ffb0c0); }
.cover { background: linear-gradient(#927200, #4e6419); }
.unwind { background: linear-gradient(#1d00d8, #b00018); color: #35002c; }
.buildup { background: linear-gradient(150deg, #fff 50%, #b4d69c); }
.data .up, .data .down { color: #fff; font-family: 'Liberation Sans', Arial, sans-serif; font-size: 10.3px; }
.up { background: #a9d08e; }
.down { background: #ff9595; }
.peach { background: #fce4d6; }
.ice { background: #ddebf7; }
.data .price { background: #5b9bd5; justify-content: center; padding-right: 0; }
.data .hot { background: #ffc000; font-weight: 700; }
.data .rose { background: #ffc7ce; color: #a80018; font-weight: 700; }
.data .ants { outline: 1px dashed #fff; outline-offset: -1px; }
.data .sup, .data .sdown { font-family: 'Liberation Sans', Arial, sans-serif; font-size: 11.5px; }
.sup { background: #c6e0b4; }
.sdown { background: #f4a0a0; }
.tshort { background: #70ad47; }
.tlong { background: linear-gradient(20deg, #fff 30%, #c0deac); }
.trend { background: linear-gradient(#eef4fb, #71a8db); }
.data .v, .data .vgreen { border-right: 0; }
.v { background: #fff; }
.vgreen { background: #70ad47; }
.grey { background: #b9c4cc; }
.data.last .c { border-bottom: 0; }
.refresh { position: absolute; left: 732px; top: 28px; width: 142px; height: 32px; background: #efefef; border-right: 2px solid #8a8a8a; border-bottom: 2px solid #8a8a8a; border-top: 1px solid #e5e5e5; display: flex; align-items: center; justify-content: center; color: #d00000; font-weight: 700; font-size: 13.5px; }
.refresh span { border-bottom: 1px solid #d00000; line-height: 0; }`,
        `<div class="rows"></div><div class="refresh"><span>${label('RefreshAll', 64, 0, 'line-height:14px')}</span></div>`,
        Sheet
    );

    define(
        'sheet-scroll',
        `
:host { display: flex; flex-direction: column; align-items: center; flex: 1; height: 436px; background: #f3f3f3; padding: 3px 0 0; }
div { width: 7px; height: 155px; border-radius: 4px; background: #6b6b6b; margin: 4px 0 259px; }`,
        `${icon('triu')}<div></div>${icon('trid')}`
    );

    define(
        'sheet-tabs',
        `
:host { display: flex; align-items: center; height: 25px; font-size: 10.8px; color: #444; border-bottom: 1px solid #fff; }
i { width: 1px; height: 14px; background: #d0d0d0; }
.on { width: 48px; height: 23px; margin: -2px 0 0 4px; padding: 2px 6px 0; background: #fff; border-radius: 0 0 4px 4px; color: #222; font-weight: 700; }
.on div { border-bottom: 2px solid #107c41; height: 17px; }
.track { width: 414px; height: 7px; border-radius: 4px; background: #6b6b6b; margin-left: 4px; }`,
        `${icon('prev', 23)}${icon('next', 22)}${label('StockFutures', 63, 46)}<i style="margin-left:10px"></i>
${label('Equity', 30, 11)}<i style="margin-left:10px"></i>${label('Cookies', 39, 11)}<i style="margin-left:9px"></i>
${label('OptionChain', 62, 11)}<i style="margin-left:10px"></i>
<div class="on"><div>${label('Sheet2', 34)}</div></div><i style="margin-left:2px"></i>${icon('plus', 33)}
${icon('dots', 302)}${icon('tri', 16)}<div class="track"></div>${icon('trir', 44)}`
    );

    define(
        'status-bar',
        `
:host { display: flex; align-items: center; height: 17px; font-size: 9.3px; color: #333; background: #f5f5f5; }
.on { width: 32px; height: 17px; background: #dedede; margin-left: 982px; padding: 3px 10px; }
.slide { display: flex; align-items: center; width: 81px; height: 17px; margin-left: 3px; background: linear-gradient(#c9c9c9, #c9c9c9) center / 100% 1px no-repeat; padding-left: 39px; }
.slide i { width: 4px; height: 9px; background: #555; }`,
        `${label('Ready', 24, 6)}${icon('macro', 16)}<div class="on">${icon('vnormal')}</div>
${icon('vpage', 10)}${icon('vbreak', 20)}${icon('minus', 15)}<div class="slide"><i></i></div>
<x-icon name="plus" style="margin-left:2px"></x-icon>${label('100%', 22, 10)}`
    );

    define(
        'task-app',
        `
:host { position: relative; display: flex; align-items: center; justify-content: center; width: 35.2px; height: 38px; }
:host([open]):after { content: ''; position: absolute; left: 15px; bottom: 4px; width: 5px; height: 2px; border-radius: 1px; background: #848a96; }
:host([active]):before { content: ''; position: absolute; left: 3px; top: 4px; width: 28px; height: 31px; border-radius: 3px; background: rgba(255, 255, 255, .75); }
:host([active]):after { left: 12px; bottom: 4px; width: 12px; background: #0067c0; }
div { position: relative; }
slot { position: absolute; }
::slotted(b) { position: absolute; right: 1px; top: 5px; min-width: 12px; height: 12px; border-radius: 7px; background: #0a74c9; color: #fff; font-size: 8.5px; line-height: 12px; text-align: center; font-weight: 600; }
::slotted(em) { position: absolute; left: 12px; top: 12px; font: 700 9px/13px 'Liberation Sans', Arial, sans-serif; color: #b9b3ff; }`,
        `<div></div><slot></slot>`,
        class extends HTMLElement {
            connectedCallback() {
                if (this.hasAttribute('icon')) {
                    this.shadowRoot.querySelector('div').innerHTML = icon(this.getAttribute('icon'));
                }
            }
        }
    );

    define(
        'task-bar',
        `
:host { display: flex; align-items: center; flex: 1; font-size: 9.5px; color: #333; background: linear-gradient(90deg, #d3dae6, #d5dcf2 28%, #dadcf4 50%, #d5dcf3 70%, #d5dae8); }
.weather { width: 305.5px; color: #555; }
.clock { display: flex; flex-direction: column; align-items: flex-end; }
.lang { display: flex; flex-direction: column; align-items: center; }
b { width: 12px; height: 12px; border-radius: 50%; margin-left: 6px; background: #0a74c9; color: #fff; font: 600 8.5px/12px 'Open Sans', sans-serif; text-align: center; }`,
        `${icon('weather', 16)}
<div class="weather"><div style="color:#222">${label('30°C', 20, 5)}</div><div>${label('Mostly cloudy', 61, 5)}</div></div>
<task-app icon="win"></task-app><task-app icon="chrome" open></task-app><task-app icon="folder"></task-app>
<task-app icon="mail"><b style="width:16px;right:2px">25</b></task-app><task-app icon="edge"></task-app>
<task-app icon="excelbig" open active></task-app><task-app icon="word"></task-app><task-app icon="calc"></task-app>
<task-app></task-app><task-app icon="calendar"></task-app><task-app icon="notes" open></task-app>
<task-app icon="obs" open></task-app><task-app icon="mic"></task-app><task-app icon="whatsapp" open><b>4</b></task-app>
<task-app icon="pr"><em>Pr</em></task-app><task-app icon="media" open></task-app><task-app icon="filmora" open></task-app>
${icon('trayup', 112)}${icon('traymic', 13)}
<div class="lang" style="margin-left:15px">${label('ENG', 19)}${label('US', 12)}</div>
${icon('wifi', 15)}${icon('speaker', 5)}${icon('battery', 7)}
<div class="clock" style="margin-left:11px">${label('20:32', 23)}${label('16-07-2023', 49)}</div><b>3</b>`
    );

    define(
        'excel-desktop',
        `
:host { display: flex; flex-direction: column; width: 1280px; height: 720px; overflow: hidden; }
title-bar, ribbon-tabs, excel-ribbon, formula-bar, sheet-tabs, status-bar { flex-shrink: 0; }
.sheet { display: flex; height: 436px; flex-shrink: 0; margin-top: -1px; }`,
        `<title-bar></title-bar><ribbon-tabs></ribbon-tabs><excel-ribbon></excel-ribbon><formula-bar></formula-bar>
<div class="sheet"><sheet-grid></sheet-grid><sheet-scroll></sheet-scroll></div>
<sheet-tabs></sheet-tabs><status-bar></status-bar><task-bar></task-bar>`
    );
})();
</script>
</body>
</html>
